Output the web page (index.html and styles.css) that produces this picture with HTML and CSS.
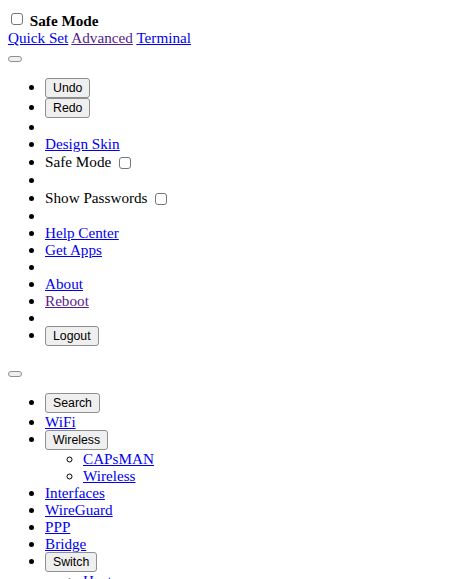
FILE: index.html
```html
<!DOCTYPE html>
<html lang="en">
<head>
  <meta charset="UTF-8">
  <title>RouterOS</title>
  <link rel="stylesheet" href="styles.css">
</head>
<body>

  <div class="top-bar">
    <label class="safe-mode"><input type="checkbox"> Safe Mode</label>
    <div class="modes">
      <a href="#">Quick Set</a>
      <a href="#" class="visited">Advanced</a>
      <a href="#">Terminal</a>
    </div>
    <div class="toggle-row"><button class="toggle"></button></div>
  </div>

  <ul class="menu">
    <li><button>Undo</button></li>
    <li><button>Redo</button></li>
    <li></li>
    <li><a href="#">Design Skin</a></li>
    <li>Safe Mode <input type="checkbox"></li>
    <li></li>
    <li>Show Passwords <input type="checkbox"></li>
    <li></li>
    <li><a href="#">Help Center</a></li>
    <li><a href="#">Get Apps</a></li>
    <li></li>
    <li><a href="#">About</a></li>
    <li><a href="#" class="visited">Reboot</a></li>
    <li></li>
    <li><button>Logout</button></li>
  </ul>

  <div class="toggle-row"><button class="toggle"></button></div>

  <ul class="sidebar">
    <li><button>Search</button></li>
    <li><a href="#">WiFi</a></li>
    <li>
      <button>Wireless</button>
      <ul>
        <li><a href="#">CAPsMAN</a></li>
        <li><a href="#">Wireless</a></li>
      </ul>
    </li>
    <li><a href="#">Interfaces</a></li>
    <li><a href="#">WireGuard</a></li>
    <li><a href="#">PPP</a></li>
    <li><a href="#">Bridge</a></li>
    <li>
      <button>Switch</button>
      <ul>
        <li><a href="#">Host</a></li>
        <li><a href="#">Port</a></li>
      </ul>
    </li>
  </ul>

</body>
</html>
```

FILE: styles.css
```css
body {
  margin: 8px;
  font-family: "Liberation Serif", "Times New Roman", serif;
  font-size: 15.2px;
  line-height: 17px;
  color: #000;
  background: #fff;
}
a {
  color: #0000ee;
}
a.visited {
  color: #551a8b;
}
.safe-mode {
  display: block;
  padding-top: 4px;
  font-weight: bold;
}
input[type="checkbox"] {
  appearance: none;
  box-sizing: border-box;
  width: 12px;
  height: 12px;
  margin: 5px 3px 2px 4px;
  border: 1px solid #767676;
  border-radius: 3px;
  background: #fff;
  vertical-align: -4px;
}
.safe-mode input[type="checkbox"] {
  margin: 0 3px 0 3px;
  vertical-align: 1.5px;
}
button {
  box-sizing: border-box;
  height: 20px;
  margin: 0;
  padding: 0 7px;
  font-family: "Liberation Sans", Arial, sans-serif;
  font-size: 12.3px;
  line-height: 18px;
  border: 1px solid #8f8f8f;
  border-radius: 3px;
  background-color: #efefef;
  color: #000;
  vertical-align: top;
}
.toggle-row {
  height: 7px;
  padding-top: 10px;
}
.toggle {
  display: block;
  width: 14px;
  height: 6px;
  padding: 0;
  margin: 0;
}
ul {
  margin: 15px 0;
  padding-left: 37px;
}
ul ul {
  margin: 0;
  padding-left: 38px;
  list-style: circle;
}
```
